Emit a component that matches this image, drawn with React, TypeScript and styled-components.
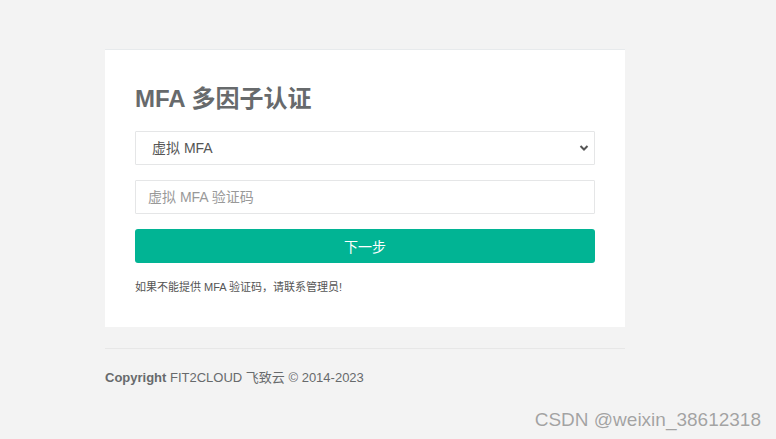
import React from "react";
import styled, { createGlobalStyle } from "styled-components";

const GlobalStyle = createGlobalStyle`
  html, body {
    margin: 0;
    padding: 0;
    background: #f3f3f3;
  }
  body {
    font-family: "Liberation Sans", Arial, "Noto Sans CJK SC", sans-serif;
    color: #676a6c;
  }
`;

const Page = styled.div`
  min-height: 439px;
  padding: 49px 0 0 105px;
  box-sizing: border-box;
  position: relative;
`;

const Wrapper = styled.div`
  width: 520px;
`;

const Card = styled.div`
  background: #fff;
  border-top: 1px solid #e7eaec;
  padding: 29px 30px 32px;
`;

const Title = styled.h2`
  margin: 0 0 12px;
  font-size: 24px;
  line-height: 40px;
  font-weight: 700;
  color: #676a6c;
`;

const Form = styled.form`
  display: flex;
  flex-direction: column;
  gap: 15px;
`;

const SelectWrap = styled.div`
  position: relative;
`;

const Select = styled.select`
  appearance: none;
  width: 100%;
  height: 34px;
  box-sizing: border-box;
  border: 1px solid #e5e6e7;
  border-radius: 1px;
  background: #fff;
  padding: 0 12px 0 16px;
  font-family: inherit;
  font-size: 14px;
  color: #555;
  outline: none;
`;

const Chevron = styled.svg`
  position: absolute;
  right: 6px;
  top: 12px;
  width: 10px;
  height: 10px;
  pointer-events: none;
`;

const Input = styled.input`
  width: 100%;
  height: 34px;
  box-sizing: border-box;
  border: 1px solid #e5e6e7;
  border-radius: 1px;
  padding: 0 12px;
  font-family: inherit;
  font-size: 14px;
  color: #555;
  outline: none;
  &::placeholder {
    color: #999;
  }
`;

const Button = styled.button`
  height: 34px;
  border: 0;
  border-radius: 3px;
  background: #01b494;
  color: #fff;
  font-family: inherit;
  font-size: 14px;
  cursor: pointer;
`;

const Help = styled.p`
  margin: 16px 0 0;
  font-size: 11px;
  line-height: 16px;
  color: #555;
`;

const Divider = styled.hr`
  margin: 21px 0 0;
  border: 0;
  border-top: 1px solid #e7e7e7;
`;

const Footer = styled.div`
  padding-top: 20px;
  font-size: 13px;
  line-height: 18px;
  color: #676a6c;
  strong {
    font-weight: 700;
  }
`;

const Watermark = styled.div`
  position: absolute;
  right: 15px;
  bottom: 8px;
  font-size: 19px;
  color: #a3a3a3;
  text-shadow: 0 0 1px #fff;
`;

export default function App() {
  return (
    <>
      <GlobalStyle />
      <Page>
        <Wrapper>
          <Card>
            <Title>MFA 多因子认证</Title>
            <Form onSubmit={(e) => e.preventDefault()}>
              <SelectWrap>
                <Select defaultValue="otp">
                  <option value="otp">虚拟 MFA</option>
                </Select>
                <Chevron viewBox="0 0 10 10">
                  <path d="M1.5 3 L5 6.5 L8.5 3" fill="none" stroke="#555" strokeWidth="2" />
                </Chevron>
              </SelectWrap>
              <Input placeholder="虚拟 MFA 验证码" />
              <Button type="submit">下一步</Button>
            </Form>
            <Help>如果不能提供 MFA 验证码，请联系管理员!</Help>
          </Card>
          <Divider />
          <Footer>
            <strong>Copyright</strong> FIT2CLOUD 飞致云 © 2014-2023
          </Footer>
        </Wrapper>
        <Watermark>CSDN @weixin_38612318</Watermark>
      </Page>
    </>
  );
}
